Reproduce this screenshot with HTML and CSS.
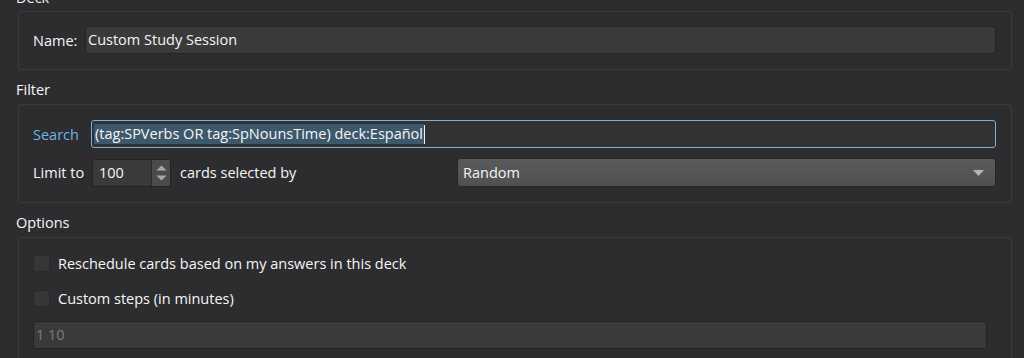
FILE: index.html
```html
<!DOCTYPE html>
<html lang="en">
<head>
    <meta charset="UTF-8">
    <meta name="viewport" content="width=device-width, initial-scale=1.0">
    <title>Custom Study Session</title>
    <link rel="stylesheet" href="styles.css">
</head>
<body>
    <div class="page">
        <div class="group-title first">Deck</div>
        <div class="group">
            <div class="row">
                <span class="label name-label">Name:</span>
                <div class="field grow">Custom Study Session</div>
            </div>
        </div>

        <div class="group-title">Filter</div>
        <div class="group filter-grid">
            <span class="label search-label">Search</span>
            <div class="field search-field"><span class="selected">(tag:SPVerbs OR tag:SpNounsTime) deck:Español</span><span class="caret"></span></div>

            <span class="label">Limit to</span>
            <div class="row limit-row">
                <div class="spin">
                    <span class="spin-value">100</span>
                    <span class="spin-buttons">
                        <svg width="11" height="6" viewBox="0 0 11 6"><path d="M0.5 5.5 L5.5 0.5 L10.5 5.5 Z" fill="#a9a9a9"/></svg>
                        <svg width="11" height="6" viewBox="0 0 11 6"><path d="M0.5 0.5 L5.5 5.5 L10.5 0.5 Z" fill="#a9a9a9"/></svg>
                    </span>
                </div>
                <span class="label">cards selected by</span>
                <div class="combo">
                    <span>Random</span>
                    <svg width="11" height="6" viewBox="0 0 11 6"><path d="M0 0 L11 0 L5.5 6 Z" fill="#b4b4b4"/></svg>
                </div>
            </div>
        </div>

        <div class="group-title">Options</div>
        <div class="group options">
            <label class="check-row"><span class="checkbox"></span>Reschedule cards based on my answers in this deck</label>
            <label class="check-row"><span class="checkbox"></span>Custom steps (in minutes)</label>
            <div class="field steps-field">1 10</div>
        </div>
    </div>
</body>
</html>
```

FILE: styles.css
```css
html, body {
    overflow: hidden;
}
body {
    margin: 0;
    padding: 0;
    background: #2d2d30;
    color: #f5f5f5;
    font-family: "Open Sans", "Noto Sans", sans-serif;
    font-size: 14.5px;
}
.page {
    height: 358px;
    display: flex;
    flex-direction: column;
    padding: 0 12px 0 18px;
}
.group-title {
    flex: none;
    height: 20px;
    line-height: 20px;
    margin: 10px 0 4px -2px;
}
.group-title.first {
    margin-top: -12px;
    margin-bottom: 3px;
}
.group {
    flex: none;
    border: 1px solid #3b3b3e;
    border-radius: 3px;
    padding: 14px 15px 15px 14px;
}
.row {
    display: flex;
    align-items: center;
}
.label {
    white-space: nowrap;
}
.name-label {
    width: 52px;
    flex: none;
}
.grow {
    flex: 1;
}
.field {
    height: 26px;
    line-height: 26px;
    background: #3a3a3b;
    border: 1px solid #232324;
    border-radius: 3px;
    padding: 0 2px;
    white-space: nowrap;
}
.filter-grid {
    display: grid;
    grid-template-columns: 58px 1fr;
    row-gap: 10px;
    align-items: center;
    padding-top: 15px;
}
.search-label {
    color: #6cb6e8;
}
.search-field {
    background: #323234;
    border-color: #70b3e0;
    display: flex;
    align-items: center;
}
.selected {
    background: #3e586b;
    line-height: 20px;
    padding: 0 1px;
}
.caret {
    width: 1px;
    height: 19px;
    background: #f0f0f0;
}
.limit-row {
    gap: 9px;
}
.spin {
    display: flex;
    width: 79px;
    height: 28px;
    box-sizing: border-box;
    border: 1px solid #232324;
    border-radius: 3px;
    background: #3a3a3b;
    overflow: hidden;
    margin-left: 1px;
}
.spin-value {
    flex: 1;
    line-height: 26px;
    padding-left: 6px;
}
.spin-buttons {
    width: 18px;
    display: flex;
    flex-direction: column;
    justify-content: center;
    align-items: center;
    gap: 4px;
    background: #4b4b4c;
    border-left: 1px solid #2a2a2b;
}
.combo {
    margin-left: auto;
    width: 539px;
    height: 29px;
    box-sizing: border-box;
    display: flex;
    align-items: center;
    justify-content: space-between;
    padding: 0 11px 0 5px;
    background: linear-gradient(#5b5b5c, #505051);
    border: 1px solid #262627;
    border-radius: 3px;
}
.options {
    flex: 1;
    display: flex;
    flex-direction: column;
    gap: 9px;
    padding-top: 12px;
    padding-bottom: 0;
    border-bottom: none;
    border-radius: 3px 3px 0 0;
}
.check-row {
    display: flex;
    align-items: center;
    height: 26px;
    gap: 8px;
}
.checkbox {
    width: 17px;
    height: 17px;
    box-sizing: border-box;
    background: #363638;
    border: 1px solid #29292a;
    border-radius: 2px;
}
.steps-field {
    color: #7b7b7b;
    margin-top: 1px;
    margin-right: 9px;
}
```
